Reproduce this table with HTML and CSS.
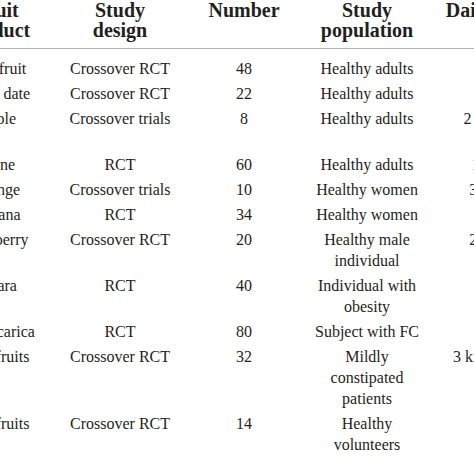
FILE: index.html
```html
<!DOCTYPE html>
<html>
<head>
<meta charset="utf-8">
<link rel="stylesheet" href="styles.css">
</head>
<body>
<table class="studies">
  <colgroup>
    <col class="c-fruit"><col class="c-design"><col class="c-num"><col class="c-pop"><col class="c-dose"><col class="c-dur">
  </colgroup>
  <thead>
    <tr>
      <th>Fruit<br>product</th>
      <th>Study<br>design</th>
      <th>Number</th>
      <th>Study<br>population</th>
      <th>Daily dose</th>
      <th>Duration</th>
    </tr>
  </thead>
  <tbody>
    <tr><td>Kiwifruit</td><td>Crossover RCT</td><td>48</td><td>Healthy adults</td><td></td><td>4 weeks</td></tr>
    <tr><td>Dried date</td><td>Crossover RCT</td><td>22</td><td>Healthy adults</td><td></td><td>3 weeks</td></tr>
    <tr><td>Apple</td><td>Crossover trials</td><td>8</td><td>Healthy adults</td><td>2 apples</td><td>2<br>weeks</td></tr>
    <tr><td>Prune</td><td>RCT</td><td>60</td><td>Healthy adults</td><td>100 g</td><td>4 weeks</td></tr>
    <tr><td>Orange</td><td>Crossover trials</td><td>10</td><td>Healthy women</td><td>3 cups</td><td>1 week</td></tr>
    <tr><td>Banana</td><td>RCT</td><td>34</td><td>Healthy women</td><td></td><td>2 months</td></tr>
    <tr><td>Blueberry</td><td>Crossover RCT</td><td>20</td><td>Healthy male<br>individual</td><td>2 cups</td><td>6 weeks</td></tr>
    <tr><td>Juçara</td><td>RCT</td><td>40</td><td>Individual with<br>obesity</td><td></td><td>6 weeks</td></tr>
    <tr><td>Ficus carica</td><td>RCT</td><td>80</td><td>Subject with FC</td><td></td><td>8 weeks</td></tr>
    <tr><td>Kiwifruits</td><td>Crossover RCT</td><td>32</td><td>Mildly<br>constipated<br>patients</td><td>3 kiwifruits</td><td>4 weeks</td></tr>
    <tr><td>Kiwifruits</td><td>Crossover RCT</td><td>14</td><td>Healthy<br>volunteers</td><td></td><td>3 days</td></tr>
  </tbody>
</table>
</body>
</html>
```

FILE: styles.css
```css
html, body {
  margin: 0;
  padding: 0;
  background: #ffffff;
  overflow: hidden;
  width: 474px;
  height: 474px;
}

.studies {
  margin-left: -63px;
  border-collapse: collapse;
  table-layout: fixed;
  width: 733px;
  font-family: "Liberation Serif", "Times New Roman", serif;
  color: #231f20;
}

.c-fruit { width: 119px; }
.c-design { width: 128px; }
.c-num { width: 120px; }
.c-pop { width: 126px; }
.c-dose { width: 120px; }
.c-dur { width: 120px; }

.studies th {
  font-size: 20px;
  font-weight: bold;
  line-height: 20px;
  text-align: center;
  vertical-align: top;
  padding: 0 0 8px 0;
  border-bottom: 1px solid #b4b4b4;
  white-space: nowrap;
}

.studies td {
  font-size: 16px;
  line-height: 21px;
  text-align: center;
  vertical-align: top;
  padding: 2px 0;
  white-space: nowrap;
}

.studies tbody tr:first-child td {
  padding-top: 9px;
}
```
